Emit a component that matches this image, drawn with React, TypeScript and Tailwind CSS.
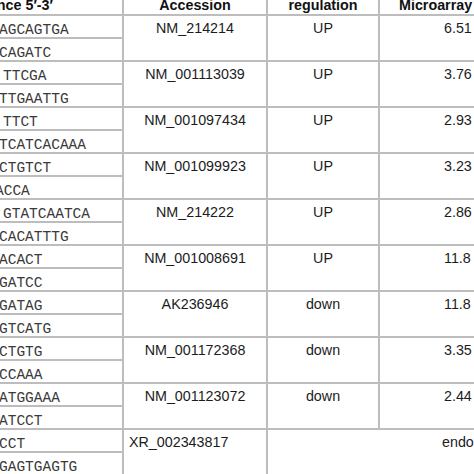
import React from "react";

type Row = {
  s1: string;
  s1m: string;
  s2: string;
  s2m: string;
  acc: string;
  reg: string;
  fc: string;
};

const rows: Row[] = [
  { s1: "AGCAGTGA", s1m: "-ml-[1px]", s2: "CAGATC", s2m: "-ml-[1px]", acc: "NM_214214", reg: "UP", fc: "6.51" },
  { s1: "TTCGA", s1m: "ml-[3px]", s2: "TTGAATTG", s2m: "-ml-[1px]", acc: "NM_001113039", reg: "UP", fc: "3.76" },
  { s1: "TTCT", s1m: "ml-[3px]", s2: "TCATCACAAA", s2m: "-ml-[1px]", acc: "NM_001097434", reg: "UP", fc: "2.93" },
  { s1: "CTGTCT", s1m: "-ml-[1px]", s2: "ACCA", s2m: "-ml-[5px]", acc: "NM_001099923", reg: "UP", fc: "3.23" },
  { s1: "GTATCAATCA", s1m: "ml-[3px]", s2: "CACATTTG", s2m: "-ml-[1px]", acc: "NM_214222", reg: "UP", fc: "2.86" },
  { s1: "ACACT", s1m: "-ml-[1px]", s2: "GATCC", s2m: "-ml-[1px]", acc: "NM_001008691", reg: "UP", fc: "11.8" },
  { s1: "GATAG", s1m: "-ml-[1px]", s2: "GTCATG", s2m: "-ml-[1px]", acc: "AK236946", reg: "down", fc: "11.8" },
  { s1: "CTGTG", s1m: "-ml-[1px]", s2: "CCAAA", s2m: "-ml-[1px]", acc: "NM_001172368", reg: "down", fc: "3.35" },
  { s1: "ATGGAAA", s1m: "-ml-[1px]", s2: "ATCCT", s2m: "-ml-[1px]", acc: "NM_001123072", reg: "down", fc: "2.44" },
];

const sans = "font-['Liberation_Sans',Arial,sans-serif]";
const mono = "font-['Liberation_Mono','Courier_New',monospace]";

function SeqCell({ text, m }: { text: string; m: string }) {
  return (
    <div className={`bg-white overflow-hidden flex ${mono} text-[14.5px] text-[#3a3a3a] pt-[6px] leading-4`}>
      <span className={`whitespace-nowrap ${m}`}>{text}</span>
    </div>
  );
}

function SpanCell({ children, extra = "" }: { children: React.ReactNode; extra?: string }) {
  return (
    <div className={`bg-white row-span-2 overflow-hidden ${sans} text-[14.3px] text-[#1c1c1c] leading-5 pt-[2px] whitespace-nowrap ${extra}`}>
      {children}
    </div>
  );
}

export default function App() {
  return (
    <div className="w-[474px] h-[474px] overflow-hidden bg-white">
      <div className="grid grid-cols-[122px_142px_110px_200px] grid-rows-[14px_repeat(20,21px)] gap-[2px] bg-[#bdbdbd] w-[580px]">
        {/* header */}
        <div className={`bg-white overflow-hidden flex items-end justify-end pr-[69px] ${sans} font-bold text-[14.3px] text-[#111]`}>
          <span className="whitespace-nowrap leading-[17px]">Sequence 5′-3′</span>
        </div>
        <div className={`bg-white overflow-hidden flex items-end justify-center ${sans} font-bold text-[14.3px] text-[#111]`}>
          <span className="whitespace-nowrap leading-[17px]">Accession</span>
        </div>
        <div className={`bg-white overflow-hidden flex items-end justify-center ${sans} font-bold text-[14.3px] text-[#111]`}>
          <span className="whitespace-nowrap leading-[17px]">regulation</span>
        </div>
        <div className={`bg-white overflow-hidden flex items-end pl-[19px] ${sans} font-bold text-[14.3px] text-[#111]`}>
          <span className="whitespace-nowrap leading-[17px]">Microarray</span>
        </div>

        {rows.map((r, i) => (
          <React.Fragment key={i}>
            <SeqCell text={r.s1} m={r.s1m} />
            <SpanCell extra="text-center">{r.acc}</SpanCell>
            <SpanCell extra="text-center">{r.reg}</SpanCell>
            <SpanCell extra="pl-[64px]">{r.fc}</SpanCell>
            <SeqCell text={r.s2} m={r.s2m} />
          </React.Fragment>
        ))}

        {/* last row */}
        <SeqCell text="CCT" m="-ml-[1px]" />
        <SpanCell extra="pl-[5px]">XR_002343817</SpanCell>
        <div className={`bg-white row-span-2 col-span-2 overflow-hidden ${sans} text-[14.3px] text-[#1c1c1c] leading-5 pt-[2px] whitespace-nowrap pl-[174px]`}>
          endogenous control
        </div>
        <SeqCell text="GAGTGAGTG" m="-ml-[1px]" />
      </div>
    </div>
  );
}
